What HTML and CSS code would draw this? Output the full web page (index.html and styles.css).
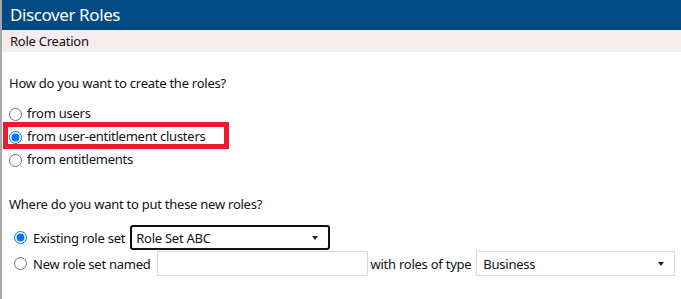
FILE: index.html
```html
<!DOCTYPE html>
<html lang="en">
<head>
    <meta charset="UTF-8">
    <title>Discover Roles</title>
    <link rel="stylesheet" href="styles.css">
</head>
<body>
    <div class="panel">
        <div class="title-bar">Discover Roles</div>
        <div class="sub-bar">Role Creation</div>

        <div class="content">
            <p class="question">How do you want to create the roles?</p>

            <div class="source-list">
                <label class="source-option">
                    <input type="radio" name="source">
                    from users
                </label>
                <label class="source-option highlighted">
                    <input type="radio" name="source" checked>
                    from user-entitlement clusters
                </label>
                <label class="source-option">
                    <input type="radio" name="source">
                    from entitlements
                </label>
            </div>

            <p class="question second">Where do you want to put these new roles?</p>

            <div class="target-list">
                <div class="target-row">
                    <label class="target-option">
                        <input type="radio" name="target" checked>
                        Existing role set
                    </label>
                    <div class="select active">
                        <span>Role Set ABC</span>
                        <span class="caret"></span>
                    </div>
                </div>
                <div class="target-row">
                    <label class="target-option">
                        <input type="radio" name="target">
                        New role set named
                    </label>
                    <input type="text" class="text-field">
                    <span class="inline-label">with roles of type</span>
                    <div class="select type-select">
                        <span>Business</span>
                        <span class="caret"></span>
                    </div>
                </div>
            </div>
        </div>
    </div>
</body>
</html>
```

FILE: styles.css
```css
* {
    margin: 0;
    padding: 0;
    box-sizing: border-box;
}

body {
    font-family: "Noto Sans", "Open Sans", sans-serif;
    font-size: 13px;
    letter-spacing: -0.25px;
    color: #111;
    background: #fff;
}

.panel {
    border-left: 2px solid #a8a8a8;
    min-height: 100vh;
}

.title-bar {
    height: 30px;
    background: #014a84;
    color: #fff;
    font-size: 17px;
    letter-spacing: -0.4px;
    line-height: 30px;
    padding-left: 8px;
}

.sub-bar {
    height: 22px;
    background: #f7eced;
    line-height: 22px;
    padding-left: 8px;
}

.content {
    padding: 0 7px;
}

.question {
    margin-top: 22px;
    line-height: 18px;
    white-space: nowrap;
}

.question.second {
    margin-top: 25px;
}

/* first radio group */
.source-list {
    margin-top: 9px;
    display: flex;
    flex-direction: column;
}

.source-option {
    display: flex;
    align-items: center;
    height: 23px;
    white-space: nowrap;
}

.source-option input {
    width: 13px;
    height: 13px;
    margin: 4px 5px 0 0;
    flex-shrink: 0;
}

.source-option.highlighted {
    align-self: flex-start;
    width: 226px;
    height: 27px;
    margin: -2px 0 -2px -6px;
    border: 5px solid #ea1c2a;
    padding-left: 1px;
}

/* second radio group */
.target-list {
    margin-top: 12px;
    display: flex;
    flex-direction: column;
    gap: 1px;
}

.target-row {
    display: flex;
    align-items: center;
    height: 25px;
    white-space: nowrap;
}

.target-option {
    display: flex;
    align-items: center;
    padding-left: 5px;
    flex-shrink: 0;
}

.target-option input {
    width: 13px;
    height: 13px;
    margin: 0 6px 0 0;
    flex-shrink: 0;
}

.select {
    display: flex;
    align-items: center;
    justify-content: space-between;
    flex-shrink: 0;
    height: 25px;
    padding: 0 10px 0 6px;
    border: 1px solid #d8d8d8;
    background: #fff;
}

.select.active {
    width: 200px;
    margin-left: 5px;
    padding-left: 4px;
    border: 2px solid #111;
    border-radius: 3px;
}

.type-select {
    width: 199px;
}

.caret {
    width: 0;
    height: 0;
    border-left: 3.5px solid transparent;
    border-right: 3.5px solid transparent;
    border-top: 4px solid #222;
}

.text-field {
    flex-shrink: 0;
    width: 211px;
    height: 25px;
    border: 1px solid #d8d8d8;
    margin-left: 6px;
    font: inherit;
}

.inline-label {
    margin: 0 5px 0 3px;
}
```
